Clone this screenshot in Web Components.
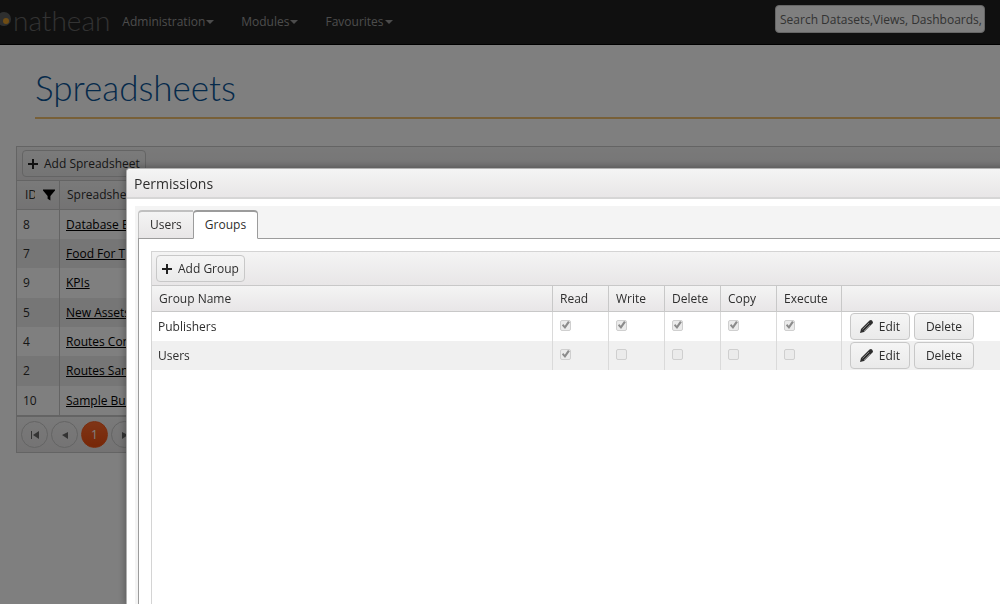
<!DOCTYPE html>
<html lang="en">
<head>
<meta charset="utf-8">
<title>Spreadsheets</title>
<style>
    body {
        margin: 0;
        background: #ffffff;
        color: #2e2e2e;
        font-family: "Open Sans", "Noto Sans", sans-serif;
        font-size: 12px;
        line-height: 18px;
        overflow: hidden;
        --bar: linear-gradient(#f4f4f4, #e8e6e7);
        --line: #c8c8c8;
    }
</style>
</head>
<body>
    <nav-bar></nav-bar>
    <page-title>Spreadsheets</page-title>
    <sheet-grid></sheet-grid>
    <modal-window heading="Permissions">
        <tab-strip tabs="Users,Groups" active="Groups">
            <permission-grid></permission-grid>
        </tab-strip>
    </modal-window>

<script>
class BaseElement extends HTMLElement {
    constructor() {
        super();
        this.attachShadow({ mode: "open" });
    }

    connectedCallback() {
        const template = document.createElement("template");
        template.innerHTML = this.getStyles() + this.getTemplate();
        this.shadowRoot.appendChild(template.content.cloneNode(true));
    }
}

class NavBar extends BaseElement {
    getTemplate() {
        const menus = ["Administration", "Modules", "Favourites"];
        return `
            <a class="brand" href="#">
                <svg width="12" height="16" viewBox="0 0 12 16">
                    <circle cx="4" cy="7" r="7" fill="#5c5f5f"/>
                    <circle cx="6" cy="9" r="3" fill="#e09a28"/>
                </svg>
                <span>nathean</span>
            </a>
            <nav>
                ${menus.map(m => `<a href="#">${m}<i></i></a>`).join("")}
            </nav>
            <input type="text" aria-label="Search" placeholder="Search Datasets,Views, Dashboards,">
        `;
    }

    getStyles() {
        return `
        <style>
            :host {
                display: flex;
                align-items: center;
                box-sizing: border-box;
                height: 45px;
                padding-right: 15px;
                background: #212121;
                border-bottom: 1px solid #000000;
            }
            .brand {
                display: flex;
                align-items: center;
                gap: 1px;
                color: #666666;
                text-decoration: none;
                font: 300 28px/36px Lato, sans-serif;
                padding-bottom: 5px;
            }
            nav {
                display: flex;
                flex: 1;
                gap: 27px;
                padding: 0 0 1px 12px;
            }
            nav a {
                display: flex;
                align-items: center;
                gap: 1px;
                color: #999999;
                text-decoration: none;
            }
            nav i {
                border: 4px solid transparent;
                border-top-color: #999999;
                border-bottom: 0;
            }
            input {
                box-sizing: border-box;
                width: 210px;
                height: 28px;
                margin-bottom: 6px;
                padding: 0 0 0 4px;
                border: 1px solid #cccccc;
                border-radius: 4px;
                background: #ffffff;
                font: inherit;
            }
            input::placeholder {
                color: #666666;
            }
        </style>
        `;
    }
}

class PageTitle extends BaseElement {
    getTemplate() {
        return `<h1><slot></slot></h1>`;
    }

    getStyles() {
        return `
        <style>
            :host {
                display: block;
                margin: 18px 0 27px 35px;
                border-bottom: 2px solid #f0c070;
            }
            h1 {
                margin: 0;
                padding-bottom: 6px;
                color: #0b5597;
                font: 300 35px/48px Lato, sans-serif;
            }
        </style>
        `;
    }
}

class ToolButton extends BaseElement {
    getIcon() {
        const icons = {
            plus: `<path d="M5 0v10M0 5h10" stroke="#222222" stroke-width="2"/>`,
            pencil: `
                <path d="M0 13l1-4 8.500-8.500q1.500-1 2.500 0t1 2.500L4 12z" fill="#2e2e2e"/>
                <path d="M2.500 9.500L9 3M4 11l6-6" stroke="#a0a0a0" stroke-width=".7"/>`
        };
        const icon = this.getAttribute("icon");
        const size = icon === "pencil" ? 13 : 10;
        return icon ? `<svg width="${size}" height="${size}" viewBox="0 0 ${size} ${size}" fill="none">${icons[icon]}</svg>` : "";
    }

    getTemplate() {
        return `<button type="button">${this.getIcon()}<slot></slot></button>`;
    }

    getStyles() {
        return `
        <style>
            :host {
                display: inline-block;
            }
            button {
                display: flex;
                align-items: center;
                justify-content: center;
                gap: 6px;
                box-sizing: border-box;
                width: 100%;
                height: 27px;
                padding: 0 5px;
                color: inherit;
                font: inherit;
                white-space: nowrap;
                background: linear-gradient(#f5f5f5, #eaeaea);
                border: 1px solid var(--line);
                border-radius: 4px;
            }
        </style>
        `;
    }
}

class SheetGrid extends BaseElement {
    getTemplate() {
        const rows = [
            [8, "Database E"],
            [7, "Food For T"],
            [9, "KPIs"],
            [5, "New Assets"],
            [4, "Routes Con"],
            [2, "Routes Sam"],
            [10, "Sample Bud"]
        ];
        return `
            <div class="toolbar"><tool-button icon="plus">Add Spreadsheet</tool-button></div>
            <table>
                <thead>
                    <tr>
                        <th class="id">
                            <div>
                                <span>ID</span>
                                <svg width="12" height="12" viewBox="0 0 13 12"><path d="M0 0h13v1L8 7v5L5 10V7L0 1z" fill="#000000"/></svg>
                            </div>
                        </th>
                        <th>Spreadsheet</th>
                    </tr>
                </thead>
                <tbody>
                    ${rows.map(r => `<tr><td>${r[0]}</td><td><a href="#">${r[1]}</a></td></tr>`).join("")}
                </tbody>
            </table>
            <div class="pager">
                <button aria-label="First"><svg width="8" height="8"><path d="M0 0h1v8H0zM8 0v8L2 4z"/></svg></button>
                <button aria-label="Previous"><svg width="8" height="8"><path d="M7 1v7L1 4z"/></svg></button>
                <button class="current">1</button>
                <button aria-label="Next"><svg width="8" height="8"><path d="M1 1v7l6-4z"/></svg></button>
                <button aria-label="Last"><svg width="8" height="8"><path d="M7 0h1v8H7zM0 0v8l6-4z"/></svg></button>
            </div>
        `;
    }

    getStyles() {
        return `
        <style>
            :host {
                display: block;
                margin-left: 16px;
                border: 1px solid var(--line);
                border-right: 0;
            }
            .toolbar {
                display: flex;
                padding: 3px 5px;
                background: var(--bar);
                border-bottom: 1px solid var(--line);
            }
            table {
                width: 100%;
                table-layout: fixed;
                border-collapse: separate;
                border-spacing: 0;
            }
            th, td {
                box-sizing: border-box;
                height: 29px;
                padding: 0 6px;
                text-align: left;
                font-weight: normal;
                white-space: nowrap;
            }
            th {
                padding: 0 7px;
                background: var(--bar);
                border-bottom: 1px solid var(--line);
            }
            th:first-child, td:first-child {
                border-right: 1px solid var(--line);
            }
            th.id {
                width: 43px;
                padding: 0 4px 0 8px;
            }
            th div {
                display: flex;
                align-items: center;
                justify-content: space-between;
            }
            th span {
                width: 10px;
                overflow: hidden;
            }
            tbody tr:nth-child(even) {
                background: #ededed;
            }
            tbody tr:nth-child(3n) td {
                height: 30px;
            }
            td a {
                color: #000000;
            }
            .pager {
                display: flex;
                gap: 3px;
                padding: 4px;
                background: var(--bar);
                border-top: 2px solid var(--line);
            }
            .pager button {
                display: flex;
                align-items: center;
                justify-content: center;
                box-sizing: border-box;
                width: 27px;
                height: 27px;
                padding: 0;
                border: 1px solid var(--line);
                border-radius: 50%;
                background: none;
                font: inherit;
            }
            .pager svg {
                fill: #666666;
            }
            .pager .current {
                border-color: #f45a1c;
                background: linear-gradient(#ff6a2c, #ee4e10);
                color: #ffffff;
            }
        </style>
        `;
    }
}

class ModalWindow extends BaseElement {
    getTemplate() {
        return `
            <section role="dialog" aria-labelledby="heading">
                <header id="heading">${this.getAttribute("heading")}</header>
                <div class="content"><slot></slot></div>
            </section>
        `;
    }

    getStyles() {
        return `
        <style>
            :host {
                display: flex;
                box-sizing: border-box;
                position: fixed;
                inset: 0;
                padding: 168px 0 0 126px;
                overflow: hidden;
                background: rgba(0, 0, 0, 0.5);
            }
            section {
                display: flex;
                flex-direction: column;
                flex: 1;
                margin-right: -40px;
                border: 1px solid #b0b0b0;
                border-bottom: 0;
                border-radius: 4px 4px 0 0;
                background: #ffffff;
                box-shadow: 0 0 7px 1px rgba(0, 0, 0, 0.3);
            }
            header {
                padding: 6px 7px 4px;
                border-bottom: 2px solid #d6d6d6;
                border-radius: 4px 4px 0 0;
                background: var(--bar);
                font-size: 14px;
            }
            .content {
                display: flex;
                flex: 1;
                padding: 7px 8px 0;
            }
        </style>
        `;
    }
}

class TabStrip extends BaseElement {
    getTemplate() {
        const active = this.getAttribute("active");
        const tabs = this.getAttribute("tabs").split(",");
        return `
            <div class="tabs" role="tablist">
                ${tabs.map(t => `<button role="tab" aria-selected="${t === active}">${t}</button>`).join("")}
            </div>
            <div class="panel" role="tabpanel"><slot></slot></div>
        `;
    }

    getStyles() {
        return `
        <style>
            :host {
                display: flex;
                flex-direction: column;
                flex: 1;
                padding: 4px 0 0 3px;
                background: #f4f4f4;
            }
            .tabs {
                display: flex;
            }
            button {
                height: 29px;
                margin-bottom: -1px;
                padding: 0 11px;
                color: inherit;
                font: inherit;
                background: var(--bar);
                border: 1px solid #c0c0c0;
                border-top-width: 2px;
                border-bottom: 1px solid #a0a0a0;
                border-right: 0;
                border-radius: 4px 0 0 0;
            }
            button[aria-selected="true"] {
                position: relative;
                background: #ffffff;
                border: 1px solid #9c9c9c;
                border-top-width: 2px;
                border-bottom-color: #ffffff;
                border-radius: 4px 4px 0 0;
            }
            .panel {
                flex: 1;
                padding: 12px 12px 0;
                border: 1px solid #9c9c9c;
                border-bottom: 0;
                background: #ffffff;
            }
        </style>
        `;
    }
}

class PermissionGrid extends BaseElement {
    getTemplate() {
        const rights = ["Read", "Write", "Delete", "Copy", "Execute"];
        const groups = [
            { name: "Publishers", allowed: rights },
            { name: "Users", allowed: ["Read"] }
        ];
        return `
            <div class="toolbar"><tool-button icon="plus">Add Group</tool-button></div>
            <table>
                <thead>
                    <tr>
                        <th class="name">Group Name</th>
                        ${rights.map(r => `<th class="${r.toLowerCase()}">${r}</th>`).join("")}
                        <th class="actions"></th>
                    </tr>
                </thead>
                <tbody>
                    ${groups.map(g => `
                        <tr>
                            <td>${g.name}</td>
                            ${rights.map(r => `<td><input type="checkbox" disabled aria-label="${g.name} ${r}" ${g.allowed.includes(r) ? "checked" : ""}></td>`).join("")}
                            <td>
                                <div class="buttons">
                                    <tool-button icon="pencil">Edit</tool-button>
                                    <tool-button>Delete</tool-button>
                                </div>
                            </td>
                        </tr>
                    `).join("")}
                </tbody>
            </table>
        `;
    }

    getStyles() {
        return `
        <style>
            :host {
                display: block;
                box-sizing: border-box;
                height: 100%;
                border: 1px solid #d4d4d4;
                border-bottom: 0;
            }
            .toolbar {
                display: flex;
                padding: 3px 4px;
                background: var(--bar);
                border-bottom: 1px solid var(--line);
            }
            table {
                width: 100%;
                table-layout: fixed;
                border-collapse: separate;
                border-spacing: 0;
            }
            th, td {
                box-sizing: border-box;
                width: 56px;
                padding: 0 0 0 7px;
                text-align: left;
                font-weight: normal;
                border-left: 1px solid #dadada;
            }
            th {
                height: 26px;
                background: var(--bar);
                border-bottom: 1px solid var(--line);
                border-left-color: var(--line);
            }
            th:first-child, td:first-child {
                border-left: 0;
            }
            td:first-child {
                padding-left: 6px;
            }
            th.name {
                width: 400px;
            }
            th.execute {
                width: 65px;
            }
            th.actions {
                width: auto;
            }
            td {
                height: 29px;
            }
            tbody tr:nth-child(even) {
                background: #f0f0f0;
            }
            .buttons {
                display: flex;
                gap: 4px;
                padding-left: 1px;
            }
            .buttons tool-button {
                width: 60px;
            }
            input {
                display: block;
                appearance: none;
                box-sizing: border-box;
                width: 11px;
                height: 11px;
                margin: 0 0 3px;
                border: 1px solid #cfcfcf;
                border-radius: 2px;
                background: #ebebeb;
            }
            input:checked::before {
                content: "";
                display: block;
                width: 9px;
                height: 9px;
                background: #8c8c8c;
                clip-path: polygon(10% 55%, 25% 40%, 42% 58%, 78% 5%, 98% 20%, 45% 95%);
            }
        </style>
        `;
    }
}

customElements.define("tool-button", ToolButton);
customElements.define("nav-bar", NavBar);
customElements.define("page-title", PageTitle);
customElements.define("sheet-grid", SheetGrid);
customElements.define("modal-window", ModalWindow);
customElements.define("tab-strip", TabStrip);
customElements.define("permission-grid", PermissionGrid);
</script>
</body>
</html>
